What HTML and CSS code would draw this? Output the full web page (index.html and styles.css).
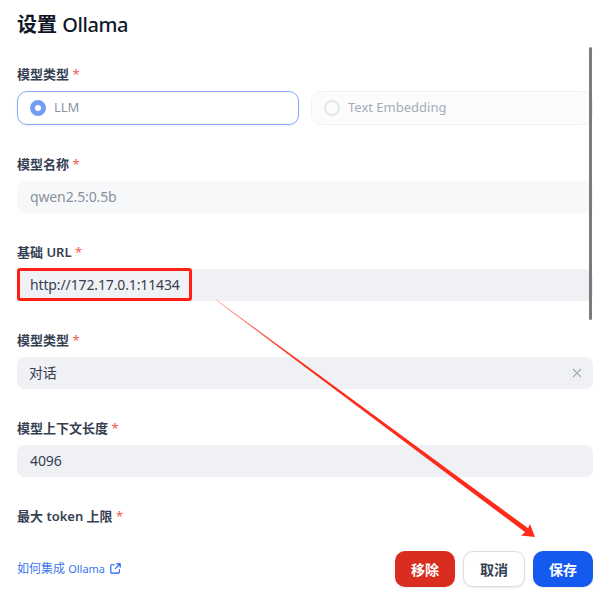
FILE: index.html
```html
<!DOCTYPE html>
<html lang="en">
<head>
    <meta charset="UTF-8">
    <title>设置 Ollama</title>

    <link rel="stylesheet" href="styles.css">
</head>

<body>

<div class="dialog">
    <h1 class="dialog-title">设置 <span class="dialog-title-name">Ollama</span></h1>

    <div class="dialog-body">
        <div class="field">
            <div class="field-label">模型类型 <span class="required">*</span></div>
            <div class="radio-row">
                <div class="radio-card active">
                    <span class="radio-dot"></span>
                    <span>LLM</span>
                </div>
                <div class="radio-card disabled">
                    <span class="radio-dot"></span>
                    <span>Text Embedding</span>
                </div>
            </div>
        </div>

        <div class="field">
            <div class="field-label">模型名称 <span class="required">*</span></div>
            <div class="text-input disabled">qwen2.5:0.5b</div>
        </div>

        <div class="field">
            <div class="field-label">基础 URL <span class="required">*</span></div>
            <div class="text-input">http://172.17.0.1:11434</div>
        </div>

        <div class="field">
            <div class="field-label">模型类型 <span class="required">*</span></div>
            <div class="text-input select">
                <span>对话</span>
                <svg class="clear-icon" width="10" height="10" viewBox="0 0 10 10">
                    <path d="M1 1L9 9M9 1L1 9" stroke="#a9adb8" stroke-width="1.3" fill="none"/>
                </svg>
            </div>
        </div>

        <div class="field">
            <div class="field-label">模型上下文长度 <span class="required">*</span></div>
            <div class="text-input">4096</div>
        </div>

        <div class="field">
            <div class="field-label">最大 token 上限 <span class="required">*</span></div>
            <div class="text-input"></div>
        </div>

        <div class="scrollbar"></div>
    </div>

    <div class="dialog-footer">
        <a class="help-link" href="#">
            <span>如何集成 <span class="help-link-small">Ollama</span></span>
            <svg width="11" height="11" viewBox="0 0 13 13" fill="none" stroke="#155aef" stroke-width="1.3">
                <path d="M5.5 2H2.2C1.5 2 1 2.5 1 3.2V10.8C1 11.5 1.5 12 2.2 12H9.8C10.5 12 11 11.5 11 10.8V7.5"/>
                <path d="M7.5 1H12V5.5M12 1L6 7"/>
            </svg>
        </a>
        <div class="button-group">
            <button class="btn btn-danger">移除</button>
            <button class="btn btn-default">取消</button>
            <button class="btn btn-primary">保存</button>
        </div>
    </div>

    <div class="mark-box"></div>
    <svg class="mark-arrow" width="615" height="595" viewBox="0 0 615 595">
        <defs>
            <linearGradient id="arrowFade" gradientUnits="userSpaceOnUse" x1="217" y1="300" x2="300" y2="362">
                <stop offset="0" stop-color="#ff2a1a" stop-opacity="0.5"/>
                <stop offset="1" stop-color="#ff2a1a"/>
            </linearGradient>
        </defs>
        <polygon points="216,299.5 528.5,528.5 525.5,532.5 217,301" fill="url(#arrowFade)"/>
        <polygon points="535,537 521,535.5 526,531.5 527.5,529.5 530,524" fill="#ff2a1a"/>
    </svg>
</div>

</body>
</html>
```

FILE: styles.css
```css
* {
    box-sizing: border-box;
}

body {
    margin: 0;
    background: #fff;
    font-family: "Noto Sans", "Noto Sans CJK SC", sans-serif;
    color: #354052;
}

.dialog {
    position: relative;
    display: flex;
    flex-direction: column;
    height: 595px;
    overflow: hidden;
}

.dialog-title {
    margin: 0;
    height: 47px;
    padding: 11px 17px 0;
    font-size: 20px;
    line-height: 28px;
    font-weight: 600;
    color: #101828;
}

.dialog-title-name {
    font-weight: 500;
    letter-spacing: -0.4px;
}

.dialog-body {
    position: relative;
    height: 483px;
    padding: 18px 22px 0 17px;
    overflow: hidden;
}

.field {
    margin-bottom: 30px;
}

.field-label {
    height: 20px;
    margin-bottom: 6px;
    font-size: 13px;
    line-height: 18px;
    font-weight: 600;
    color: #354052;
}

.required {
    color: #f97066;
}

.radio-row {
    display: grid;
    grid-template-columns: 1fr 1fr;
    gap: 12px;
}

.radio-card {
    display: flex;
    align-items: center;
    gap: 8px;
    height: 34px;
    padding: 0 12px 2px;
    border: 1px solid #eaecf0;
    border-radius: 10px;
    font-size: 13px;
    color: #98a2b2;
}

.radio-card.active {
    border-color: #84a9f6;
    box-shadow: 0 1px 2px rgba(16, 24, 40, 0.08);
    color: #8b93a1;
}

.radio-card.disabled {
    background: #fcfcfd;
    border-color: #f0f1f4;
    padding-right: 0;
    color: #a5acb8;
}

.radio-dot {
    width: 16px;
    height: 16px;
    margin-top: 2px;
    border-radius: 50%;
    border: 2px solid #e4e7ec;
    flex-shrink: 0;
}

.radio-card.active .radio-dot {
    border: 5px solid #749df5;
    background: #fff;
}

.text-input {
    display: flex;
    align-items: center;
    height: 32px;
    padding: 0 13px 2px;
    border-radius: 8px;
    background: #f0f1f5;
    font-size: 14px;
    letter-spacing: -0.13px;
    color: #354052;
}

.text-input.disabled {
    background: #f7f8fa;
    color: #8a919e;
}

.select {
    justify-content: space-between;
    padding-bottom: 0;
}

.select span {
    margin-bottom: 2px;
    margin-left: -1px;
}

.clear-icon {
    margin-right: -2px;
}

.scrollbar {
    position: absolute;
    top: 0;
    right: 23px;
    width: 3px;
    height: 273px;
    background: #7b7b7b;
    border-radius: 2px;
}

.dialog-footer {
    display: flex;
    justify-content: space-between;
    align-items: center;
    padding: 21px 22px 0 17px;
}

.help-link {
    display: flex;
    align-items: center;
    gap: 5px;
    padding-bottom: 2px;
    font-size: 12px;
    color: #3b74f0;
    text-decoration: none;
}

.help-link-small {
    font-size: 11px;
}

.button-group {
    display: flex;
    gap: 8px;
}

.btn {
    height: 36px;
    padding: 0;
    width: 60px;
    border: 0;
    border-radius: 10px;
    font-family: inherit;
    font-size: 14px;
    font-weight: 600;
    color: #fff;
    box-shadow: 0 1px 2px rgba(16, 24, 40, 0.1);
}

.btn-danger {
    background: #d92d20;
}

.btn-default {
    width: 62px;
    background: #fff;
    border: 1px solid #dcdfe4;
    color: #354052;
}

.btn-primary {
    background: #155aef;
}

.mark-box {
    position: absolute;
    left: 17px;
    top: 268px;
    width: 175px;
    height: 33px;
    border: 3px solid #ff1f14;
    border-radius: 3px;
}

.mark-arrow {
    position: absolute;
    left: 0;
    top: 0;
    pointer-events: none;
}
```
